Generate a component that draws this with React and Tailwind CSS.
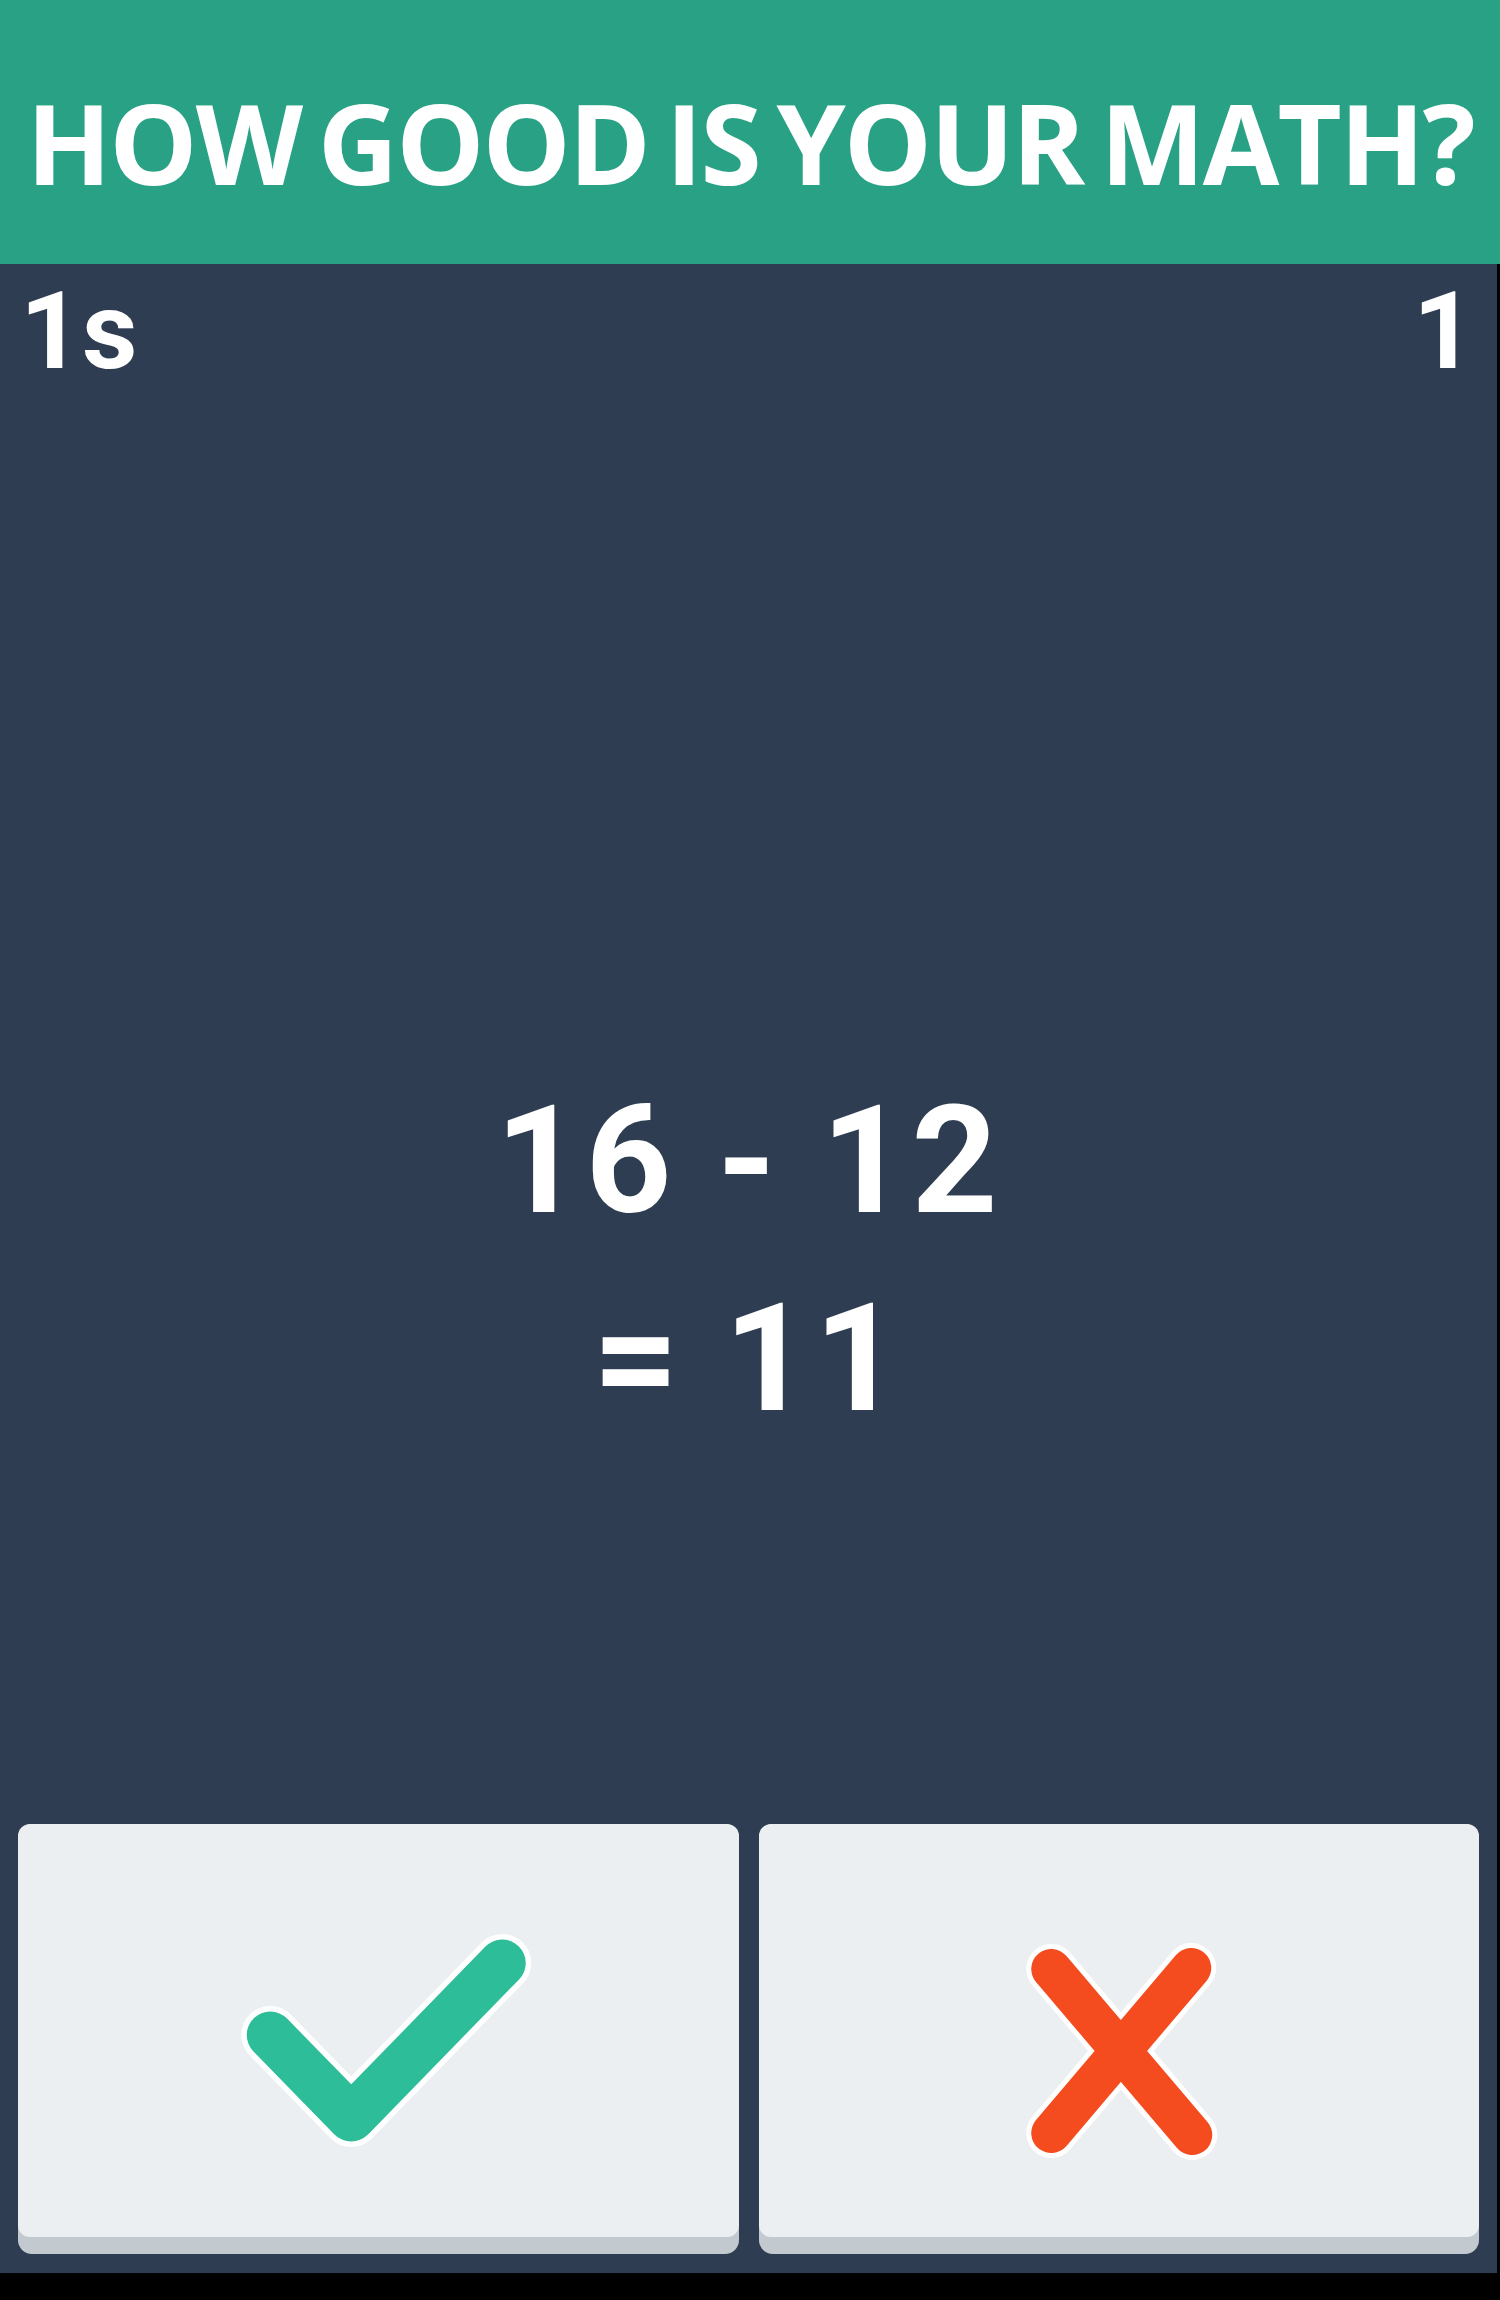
import React from "react";

// Rounded stroke icon with a white halo behind it
function Check() {
  const d = "M252 211 L333 294 L484 139";
  return (
    <svg viewBox="0 0 720 413" className="block w-full h-full">
      <path d={d} fill="none" stroke="#ffffff" strokeWidth="58" strokeLinecap="round" strokeLinejoin="round" />
      <path d={d} fill="none" stroke="#2dbd98" strokeWidth="47" strokeLinecap="round" strokeLinejoin="round" />
    </svg>
  );
}

function Cross() {
  const d = "M292 145 L433 311 M432 144 L292 309";
  return (
    <svg viewBox="0 0 720 413" className="block w-full h-full">
      <path d={d} fill="none" stroke="#ffffff" strokeWidth="50" strokeLinecap="round" />
      <path d={d} fill="none" stroke="#f44b1f" strokeWidth="40" strokeLinecap="round" />
    </svg>
  );
}

function AnswerButton({ children }) {
  return (
    <button className="h-[430px] rounded-[14px] bg-[#c3cacf] pb-[17px] cursor-pointer">
      <div className="h-full rounded-[12px] bg-[#eceff1]">{children}</div>
    </button>
  );
}

export default function App() {
  return (
    <div className="w-[1500px] h-[2300px] bg-black flex flex-col overflow-hidden">
      <header className="h-[264px] shrink-0 bg-[#29a185] pt-[87px] text-center">
        <h1
          className="text-white font-bold leading-none tracking-[-2px] [word-spacing:-10px] text-[111px]"
          style={{ fontFamily: '"Open Sans", sans-serif' }}
        >
          HOW GOOD IS YOUR MATH?
        </h1>
      </header>

      <main
        className="h-[2009px] shrink-0 mr-[3px] bg-[#2e3d51] flex flex-col text-white"
        style={{ fontFamily: "Roboto, sans-serif" }}
      >
        <div className="flex justify-between pt-[13px] pl-[20px] pr-[22px] text-[108px] font-bold leading-none">
          <span>1s</span>
          <span>1</span>
        </div>

        <div className="mt-[677px] text-center text-[150px] font-bold leading-[198px] tracking-[4px]">
          <div>16 - 12</div>
          <div>= 11</div>
        </div>

        <div className="mt-auto grid grid-cols-2 gap-[20px] px-[18px] pb-[19px]">
          <AnswerButton>
            <Check />
          </AnswerButton>
          <AnswerButton>
            <Cross />
          </AnswerButton>
        </div>
      </main>
    </div>
  );
}
